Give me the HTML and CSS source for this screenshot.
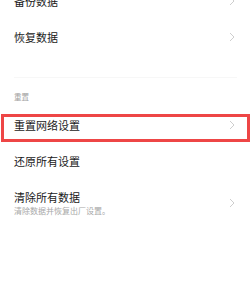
FILE: index.html
```html
<!DOCTYPE html>
<html lang="zh">
<head>
<meta charset="utf-8">
<link rel="stylesheet" href="styles.css">
</head>
<body>
<div class="list">
  <div class="row"><span class="title">备份数据</span><svg class="chev" viewBox="0 0 6 10"><path d="M1 1 L5 5 L1 9"/></svg></div>
  <div class="row"><span class="title">恢复数据</span><svg class="chev" viewBox="0 0 6 10"><path d="M1 1 L5 5 L1 9"/></svg></div>
  <div class="divider"></div>
  <div class="section">重置</div>
  <div class="row highlighted"><span class="title">重置网络设置</span><svg class="chev" viewBox="0 0 6 10"><path d="M1 1 L5 5 L1 9"/></svg><div class="mark"></div></div>
  <div class="row"><span class="title">还原所有设置</span></div>
  <div class="row tall">
    <div class="texts"><span class="title">清除所有数据</span><span class="sub">清除数据并恢复出厂设置。</span></div>
    <svg class="chev" viewBox="0 0 6 10"><path d="M1 1 L5 5 L1 9"/></svg>
  </div>
</div>
</body>
</html>
```

FILE: styles.css
```css
html, body {
  margin: 0;
  padding: 0;
  background: #ffffff;
}
body {
  width: 250px;
  height: 294px;
  overflow: hidden;
  font-family: "Noto Sans CJK SC", "Noto Sans", sans-serif;
  color: #1a1a1a;
}
.list {
  margin-top: -17px;
}
.row {
  position: relative;
  height: 36px;
  padding: 0 15px 0 14px;
  display: flex;
  align-items: center;
  justify-content: space-between;
  box-sizing: border-box;
}
.title {
  font-size: 11px;
  line-height: 14px;
  color: #1a1a1a;
}
.chev {
  width: 6px;
  height: 10px;
  fill: none;
  stroke: #c8c8c8;
  stroke-width: 0.9;
}
.divider {
  margin: 22px 13px 0 14px;
  height: 1px;
  background: #f7f7f7;
}
.section {
  padding: 14px 14px 5px;
  font-size: 7.5px;
  line-height: 10px;
  color: #a0a0a0;
}
.mark {
  position: absolute;
  top: 7px;
  left: 1px;
  right: 0;
  height: 28px;
  border: 3px solid #ee4646;
  box-sizing: border-box;
}
.row.tall {
  height: auto;
  padding-top: 11px;
  padding-bottom: 11px;
}
.texts {
  display: flex;
  flex-direction: column;
  gap: 2px;
}
.sub {
  font-size: 8px;
  line-height: 10px;
  color: #a8a8a8;
}
```
